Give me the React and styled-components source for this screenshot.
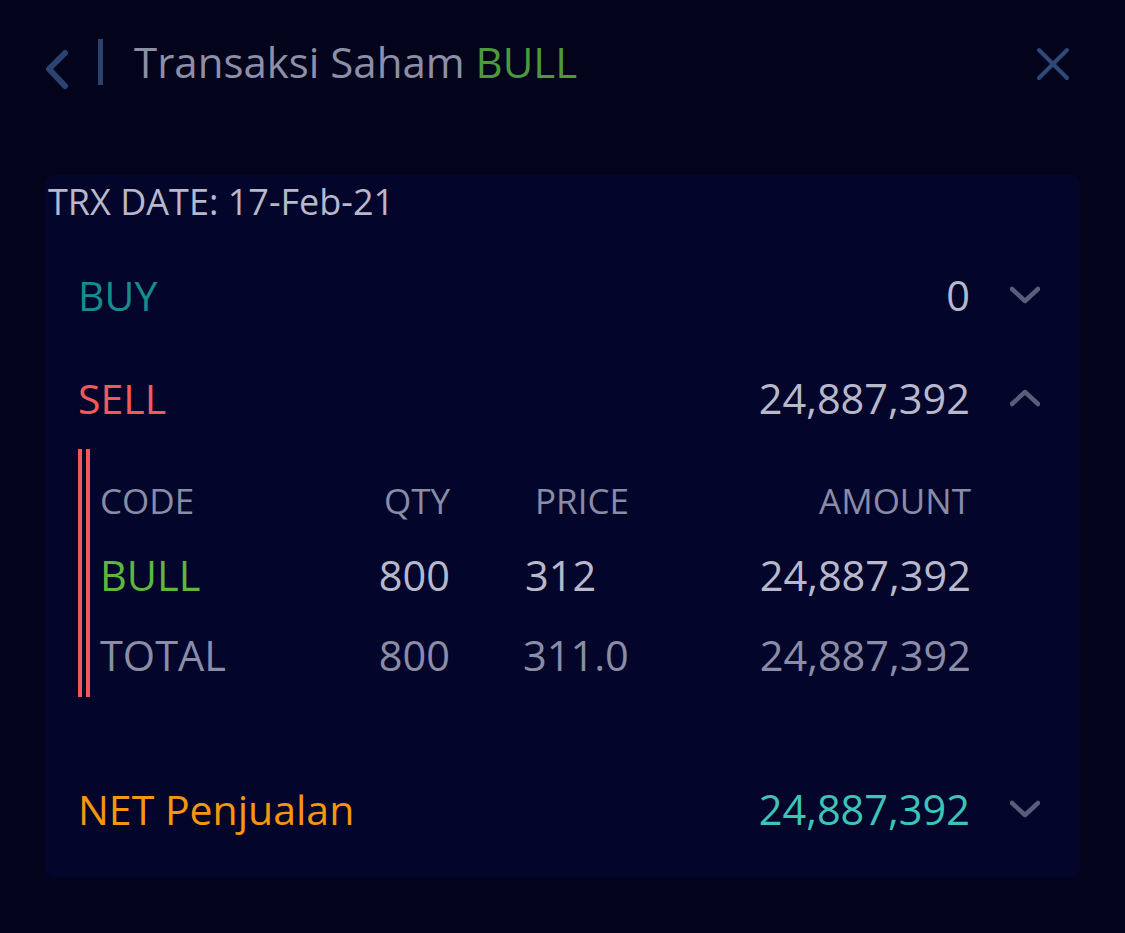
import React from "react";
import styled, { createGlobalStyle } from "styled-components";

const GlobalStyle = createGlobalStyle`
  html, body {
    margin: 0;
    padding: 0;
    background: #03041c;
  }
  body {
    font-family: "Open Sans", "Noto Sans", sans-serif;
  }
`;

const Page = styled.div`
  width: 1125px;
  height: 933px;
  background: #03041c;
  padding: 0 45px;
  box-sizing: border-box;
`;

const Header = styled.header`
  height: 128px;
  display: flex;
  align-items: center;
`;

const BackButton = styled.button`
  background: none;
  border: none;
  padding: 0;
  margin: 12px 0 0 0;
  width: 24px;
  height: 44px;
  display: flex;
  cursor: pointer;
`;

const Divider = styled.div`
  width: 5px;
  height: 46px;
  background: #2b416e;
  margin: 0 31px 0 29px;
  align-self: center;
  transform: translateY(-2px);
`;

const Title = styled.h1`
  flex: 1;
  margin: 0;
  font-size: 42px;
  font-weight: 400;
  color: #8c8fa6;
  line-height: 1;
  transform: translateY(-2px);
`;

const Highlight = styled.span`
  color: ${(p) => p.color};
`;

const CloseButton = styled.button`
  background: none;
  border: none;
  padding: 0;
  margin-right: 10px;
  width: 34px;
  height: 34px;
  display: flex;
  cursor: pointer;
`;

const Card = styled.section`
  margin-top: 47px;
  background: #04052b;
  border-radius: 10px;
  padding: 0 40px 18px 3px;
`;

const TrxDate = styled.div`
  font-size: 36px;
  line-height: 54px;
  color: #b7b9cb;
  margin-bottom: 14px;
`;

const Row = styled.div`
  height: 103px;
  display: flex;
  align-items: center;
  padding: 0 0 0 30px;
  box-sizing: border-box;
  margin-top: ${(p) => p.gap || 0}px;
`;

const Label = styled.div`
  flex: 1;
  font-size: 41px;
  color: ${(p) => p.color};
`;

const Value = styled.div`
  font-size: 41.5px;
  color: ${(p) => p.color || "#b7b9cb"};
`;

const Toggle = styled.div`
  width: 30px;
  margin-left: 40px;
  display: flex;
  justify-content: center;
`;

const Details = styled.div`
  margin-left: 30px;
  margin-right: 69px;
  border-left: 12px double #f25757;
  padding: 14px 0 0 10px;
`;

const Grid = styled.div`
  display: grid;
  grid-template-columns: 250px 100px 250px 1fr;
  align-items: center;
  height: ${(p) => p.h}px;
  font-size: ${(p) => (p.head ? 35 : 41.5)}px;
  color: ${(p) => p.color};
`;

const Cell = styled.div`
  text-align: ${(p) => p.align || "left"};
  padding-left: ${(p) => p.pad || 0}px;
  color: ${(p) => p.color || "inherit"};
`;

const Chevron = ({ up }) => (
  <svg width="30" height="18" viewBox="0 0 30 18">
    <polyline
      points={up ? "2,15 15,3 28,15" : "2,3 15,15 28,3"}
      fill="none"
      stroke="#5a5d79"
      strokeWidth="4.5"
      strokeLinecap="round"
      strokeLinejoin="round"
    />
  </svg>
);

const rows = [
  { code: "BULL", qty: "800", price: "312", amount: "24,887,392" },
];

export default function App() {
  return (
    <>
      <GlobalStyle />
      <Page>
        <Header>
          <BackButton>
            <svg width="24" height="44" viewBox="0 0 24 44">
              <polyline
                points="20,5 4,21 20,38"
                fill="none"
                stroke="#2c4372"
                strokeWidth="6"
                strokeLinecap="round"
                strokeLinejoin="round"
              />
            </svg>
          </BackButton>
          <Divider />
          <Title>
            Transaksi Saham <Highlight color="#4c9a3c">BULL</Highlight>
          </Title>
          <CloseButton>
            <svg width="34" height="34" viewBox="0 0 34 34">
              <path
                d="M3 3 L31 31 M31 3 L3 31"
                stroke="#2e4878"
                strokeWidth="4"
                strokeLinecap="round"
              />
            </svg>
          </CloseButton>
        </Header>

        <Card>
          <TrxDate>TRX DATE: 17-Feb-21</TrxDate>

          <Row>
            <Label color="#168c8c">BUY</Label>
            <Value>0</Value>
            <Toggle>
              <Chevron />
            </Toggle>
          </Row>

          <Row>
            <Label color="#f25a5a">SELL</Label>
            <Value>24,887,392</Value>
            <Toggle>
              <Chevron up />
            </Toggle>
          </Row>

          <Details>
            <Grid head h={74} color="#8a8ca6">
              <Cell>CODE</Cell>
              <Cell align="right">QTY</Cell>
              <Cell pad={85}>PRICE</Cell>
              <Cell align="right">AMOUNT</Cell>
            </Grid>
            {rows.map((r) => (
              <Grid key={r.code} h={76} color="#b7b9cb">
                <Cell color="#5cb83c">{r.code}</Cell>
                <Cell align="right">{r.qty}</Cell>
                <Cell pad={75}>{r.price}</Cell>
                <Cell align="right">{r.amount}</Cell>
              </Grid>
            ))}
            <Grid h={84} color="#8b8da6">
              <Cell>TOTAL</Cell>
              <Cell align="right">800</Cell>
              <Cell pad={73}>311.0</Cell>
              <Cell align="right">24,887,392</Cell>
            </Grid>
          </Details>

          <Row gap={60}>
            <Label color="#f5960f">NET Penjualan</Label>
            <Value color="#3cc4b8">24,887,392</Value>
            <Toggle>
              <Chevron />
            </Toggle>
          </Row>
        </Card>
      </Page>
    </>
  );
}
